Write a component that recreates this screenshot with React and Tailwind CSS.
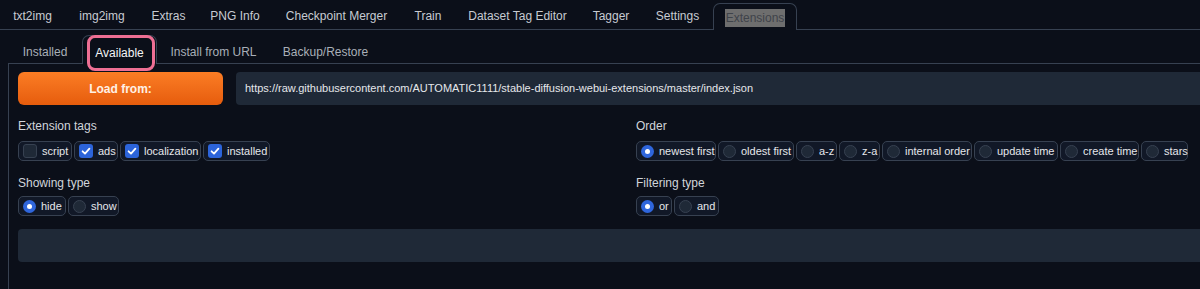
import React from "react";

const topTabs = [
  ["txt2img", "w-[65px]"],
  ["img2img", "w-[74px]"],
  ["Extras", "w-[59px]"],
  ["PNG Info", "w-[74px]"],
  ["Checkpoint Merger", "w-[129px]"],
  ["Train", "w-[54px]"],
  ["Dataset Tag Editor", "w-[125px]"],
  ["Tagger", "w-[62px]"],
  ["Settings", "w-[71px]"],
];

function Check({ checked }) {
  if (checked) {
    return (
      <span className="flex h-[14px] w-[14px] shrink-0 items-center justify-center rounded-[3px] bg-[#2c64da]">
        <svg width="14" height="14" viewBox="0 0 14 14" fill="none">
          <path d="M3.6 7.3 L6 9.6 L10.4 4.7" stroke="white" strokeWidth="1.8" strokeLinecap="round" strokeLinejoin="round" />
        </svg>
      </span>
    );
  }
  return <span className="h-[14px] w-[14px] shrink-0 rounded-[3px] border border-[#374151] bg-[#1f2937]" />;
}

function Radio({ checked }) {
  if (checked) {
    return (
      <span className="flex h-[13px] w-[13px] shrink-0 items-center justify-center rounded-full bg-[#2f66dc]">
        <span className="h-[5px] w-[5px] rounded-full bg-white" />
      </span>
    );
  }
  return <span className="h-[13px] w-[13px] shrink-0 rounded-full border border-[#374151] bg-[#1f2937]" />;
}

function CheckChip({ label, checked, w }) {
  return (
    <div className={`flex h-[20px] items-center gap-[5px] rounded-[5px] border border-[#374151] bg-[#111827] pl-[4px] ${w}`}>
      <Check checked={checked} />
      <span className="whitespace-nowrap text-[11px] text-[#e5e7eb]">{label}</span>
    </div>
  );
}

function RadioChip({ label, checked, w }) {
  return (
    <div className={`flex h-[20px] items-center gap-[5px] rounded-[5px] border border-[#374151] bg-[#111827] pl-[4px] ${w}`}>
      <Radio checked={checked} />
      <span className="whitespace-nowrap text-[11px] text-[#e5e7eb]">{label}</span>
    </div>
  );
}

export default function App() {
  return (
    <div className="h-[289px] w-[1200px] overflow-hidden bg-[#0b0f19] font-['Liberation_Sans',Arial,sans-serif]">
      <div className="w-[1250px]">
        {/* top tabs */}
        <div className="flex h-[30px] items-end border-b border-[#374151]">
          {topTabs.map(([t, w]) => (
            <div key={t} className={`flex h-[26px] items-center justify-center whitespace-nowrap text-[12px] text-[#c7cbd2] ${w}`}>
              {t}
            </div>
          ))}
          <div className="-mb-px flex h-[27px] w-[84px] items-center justify-center rounded-t-[7px] border border-b-0 border-[#374151] bg-[#0b0f19] pt-[1px]">
            <span className="bg-[#6e6e6e] px-[1px] text-[12px] leading-[18px] text-[#3f434a]">Extensions</span>
          </div>
        </div>

        <div className="pl-[8px]">
          {/* sub tabs */}
          <div className="flex h-[33px] items-end">
            <div className="flex h-[28px] w-[74px] items-center justify-center pt-[6px] text-[12px] text-[#a9afb8]">Installed</div>
            <div className="relative z-10 -mb-px flex h-[29px] w-[75px] items-center justify-center rounded-t-[7px] border border-b-0 border-[#374151] bg-[#0b0f19] pt-[6px] text-[12px] text-[#f3f4f6]">
              Available
              <div className="absolute left-[4px] top-[-1px] h-[36px] w-[68px] rounded-[8px] border-[3px] border-[#ee6f94]" />
            </div>
            <div className="flex h-[28px] w-[113px] items-center justify-center pt-[6px] text-[12px] text-[#a9afb8]">Install from URL</div>
            <div className="flex h-[28px] w-[111px] items-center justify-center pt-[6px] text-[12px] text-[#a9afb8]">Backup/Restore</div>
          </div>

          {/* panel */}
          <div className="border-l border-t border-[#374151] pb-[40px] pl-[9px] pr-[12px] pt-[8px]">
            <div className="flex gap-[13px]">
              <div className="flex h-[33px] w-[205px] shrink-0 items-center justify-center rounded-[6px] bg-gradient-to-b from-[#fb7d24] to-[#e65c0c] text-[12px] font-bold text-[#fff1e6]">
                Load from:
              </div>
              <div className="flex h-[33px] flex-1 items-center rounded-[4px] bg-[#1f2937] pl-[9px] text-[11px] text-[#e5e7eb]">
                https://raw.githubusercontent.com/AUTOMATIC1111/stable-diffusion-webui-extensions/master/index.json
              </div>
            </div>

            <div className="mt-[13px] grid grid-cols-2 gap-x-[16px]">
              <div>
                <div className="flex h-[16px] items-center text-[12px] text-[#d1d5db]">Extension tags</div>
                <div className="mt-[7px] flex gap-[2px]">
                  <CheckChip label="script" checked={false} w="w-[54px]" />
                  <CheckChip label="ads" checked w="w-[44px]" />
                  <CheckChip label="localization" checked w="w-[81px]" />
                  <CheckChip label="installed" checked w="w-[67px]" />
                </div>
                <div className="mt-[14px] flex h-[16px] items-center text-[12px] text-[#d1d5db]">Showing type</div>
                <div className="mt-[5px] flex gap-[2px]">
                  <RadioChip label="hide" checked w="w-[48px]" />
                  <RadioChip label="show" checked={false} w="w-[51px]" />
                </div>
              </div>
              <div>
                <div className="flex h-[16px] items-center text-[12px] text-[#d1d5db]">Order</div>
                <div className="mt-[7px] flex gap-[2px]">
                  <RadioChip label="newest first" checked w="w-[80px]" />
                  <RadioChip label="oldest first" checked={false} w="w-[76px]" />
                  <RadioChip label="a-z" checked={false} w="w-[41px]" />
                  <RadioChip label="z-a" checked={false} w="w-[41px]" />
                  <RadioChip label="internal order" checked={false} w="w-[90px]" />
                  <RadioChip label="update time" checked={false} w="w-[84px]" />
                  <RadioChip label="create time" checked={false} w="w-[79px]" />
                  <RadioChip label="stars" checked={false} w="w-[47px]" />
                </div>
                <div className="mt-[14px] flex h-[16px] items-center text-[12px] text-[#d1d5db]">Filtering type</div>
                <div className="mt-[5px] flex gap-[2px]">
                  <RadioChip label="or" checked w="w-[36px]" />
                  <RadioChip label="and" checked={false} w="w-[45px]" />
                </div>
              </div>
            </div>

            <div className="mt-[13px] h-[33px] rounded-[4px] bg-[#1f2937]" />
          </div>
        </div>
      </div>
    </div>
  );
}
